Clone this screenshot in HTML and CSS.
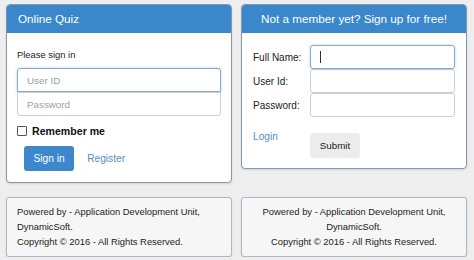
FILE: index.html
```html
<!DOCTYPE html>
<html lang="en">
<head>
  <meta charset="UTF-8">
  <meta name="viewport" content="width=device-width, initial-scale=1.0">
  <title>Online Quiz</title>
  <link rel="stylesheet" href="styles.css">
</head>
<body>

  <div class="page">
    <div class="panel login-panel">
      <div class="panel-heading">Online Quiz</div>
      <div class="panel-body">
        <p class="sign-in-title">Please sign in</p>
        <input class="field field-top focused" type="text" placeholder="User ID">
        <input class="field field-bottom" type="password" placeholder="Password">
        <label class="remember"><span class="checkbox"></span>Remember me</label>
        <div class="actions">
          <button class="btn btn-primary">Sign in</button>
          <a class="link" href="#">Register</a>
        </div>
      </div>
    </div>

    <div class="panel signup-panel">
      <div class="panel-heading centered">Not a member yet? Sign up for free!</div>
      <div class="panel-body signup-form">
        <label class="form-label">Full Name:</label>
        <div class="caret-wrap"><input class="field focused" type="text"></div>
        <label class="form-label">User Id:</label>
        <input class="field" type="text">
        <label class="form-label">Password:</label>
        <input class="field" type="password">
        <a class="link login-link" href="#">Login</a>
        <button class="btn btn-default">Submit</button>
      </div>
    </div>

    <div class="footer">
      Powered by - Application Development Unit,<br>
      DynamicSoft.<br>
      Copyright &copy; 2016 - All Rights Reserved.
    </div>
    <div class="footer centered">
      Powered by - Application Development Unit,<br>
      DynamicSoft.<br>
      Copyright &copy; 2016 - All Rights Reserved.
    </div>
  </div>

</body>
</html>
```

FILE: styles.css
```css
body {
  margin: 0;
  background-color: #eeeeee;
  font-family: 'Liberation Sans', Arial, sans-serif;
  color: #333;
}

.page {
  display: grid;
  grid-template-columns: 226px 226px;
  column-gap: 9px;
  row-gap: 14px;
  align-items: start;
  padding: 4px 0 0 6px;
}

.panel {
  background-color: #fff;
  border: 1px solid #8299b2;
  border-radius: 4px;
  box-shadow: 0 1px 2px rgba(0, 0, 0, 0.12);
  overflow: hidden;
}

.panel-heading {
  background-color: #3a87cc;
  color: #fff;
  font-size: 11.7px;
  height: 28px;
  line-height: 28px;
  padding-left: 11px;
}

.panel-heading.centered {
  padding-left: 0;
  text-align: center;
}

.login-panel .panel-body {
  display: flex;
  flex-direction: column;
  align-items: flex-start;
  padding: 15px 10px 11px 10px;
}

.sign-in-title {
  margin: 0 0 7px 0;
  font-size: 9.4px;
  line-height: 13px;
  color: #222;
}

.field {
  box-sizing: border-box;
  width: 100%;
  height: 24px;
  margin: 0;
  padding: 0 9px;
  border: 1px solid #cfcfcf;
  border-radius: 3px;
  background-color: #fff;
  font-family: 'Liberation Sans', Arial, sans-serif;
  font-size: 9.8px;
  color: #333;
  outline: none;
}

.field::placeholder {
  color: #a0a0a0;
}

.field.focused {
  border-color: #86abd3;
  box-shadow: 0 0 3px rgba(102, 160, 220, 0.45);
}

.field-top {
  border-bottom-left-radius: 0;
  border-bottom-right-radius: 0;
}

.field-bottom {
  border-top-left-radius: 0;
  border-top-right-radius: 0;
}

.remember {
  display: flex;
  align-items: center;
  gap: 5px;
  height: 14px;
  margin-top: 8px;
  font-size: 10.6px;
  font-weight: bold;
  color: #111;
}

.checkbox {
  box-sizing: border-box;
  width: 10px;
  height: 10px;
  border: 1px solid #555;
  border-radius: 1px;
  background-color: #fff;
}

.actions {
  display: flex;
  align-items: center;
  gap: 13px;
  margin: 8px 0 0 7px;
}

.btn {
  height: 25px;
  padding: 0 9.5px;
  border: none;
  border-radius: 3px;
  font-family: 'Liberation Sans', Arial, sans-serif;
  font-size: 10.2px;
  cursor: pointer;
}

.btn-primary {
  background-color: #3d88cc;
  color: #fff;
}

.btn-default {
  background-color: #ececec;
  color: #222;
  width: 50px;
  padding: 0;
  margin-top: 3px;
  font-size: 9.8px;
}

.link {
  color: #5b8cbf;
  font-size: 10.2px;
  text-decoration: none;
}

.signup-form {
  display: grid;
  grid-template-columns: 57px 1fr;
  align-items: center;
  padding: 12px 11px 10px 11px;
}

.form-label {
  font-size: 10px;
  color: #222;
}

.caret-wrap {
  position: relative;
}

.caret-wrap::after {
  content: '';
  position: absolute;
  left: 10px;
  top: 6px;
  width: 1px;
  height: 12px;
  background-color: #333;
}

.login-link {
  align-self: start;
  margin-top: 13px;
  line-height: 13px;
}

.signup-form .btn-default {
  align-self: start;
  margin-top: 16px;
}

.footer {
  box-sizing: border-box;
  height: 60px;
  padding: 6px 10px 7px 10px;
  background-color: #f6f6f6;
  border: 1px solid #a9b7c6;
  border-radius: 3px;
  box-shadow: 0 1px 2px rgba(0, 0, 0, 0.1);
  font-size: 9.4px;
  line-height: 15px;
  color: #222;
}

.footer.centered {
  text-align: center;
}
```
